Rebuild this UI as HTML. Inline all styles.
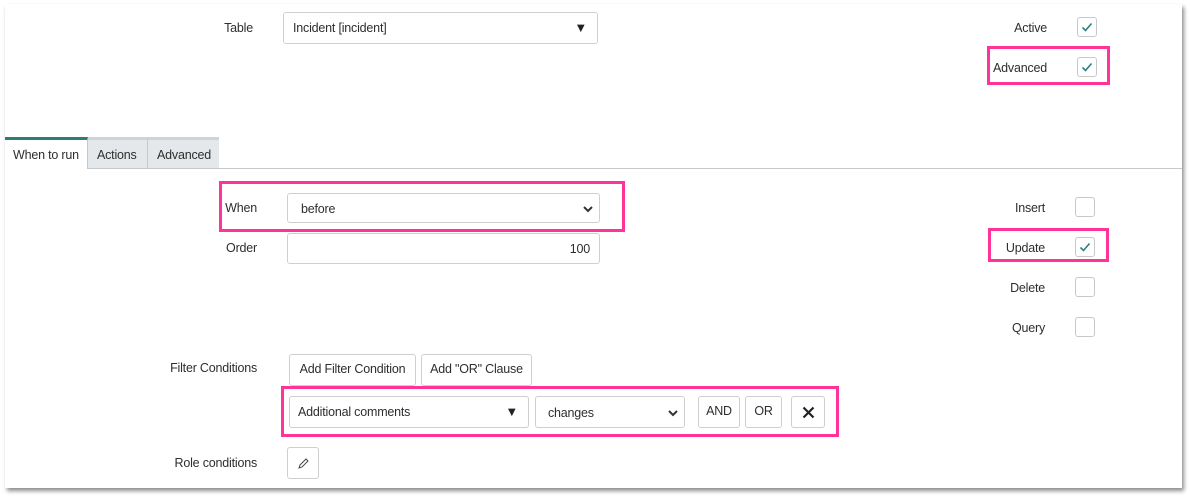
<!DOCTYPE html>
<html><head><meta charset="utf-8"><style>
*{box-sizing:border-box;margin:0;padding:0}
body{width:1190px;height:497px;background:#fff;font-family:"Liberation Sans",sans-serif;font-size:12.5px;color:#2e2e2e;position:relative;overflow:hidden;letter-spacing:-0.2px}
.panel{position:absolute;left:5px;top:4px;width:1177px;height:484px;background:#fff;box-shadow:2px 3px 4px rgba(0,0,0,.45)}
.a{position:absolute}
.lbl{position:absolute;text-align:right;line-height:16px;margin-top:1px}
.box{position:absolute;border:1px solid #cfcfcf;border-radius:3px;background:#fff;line-height:16px}
.hl{position:absolute;border:3px solid #ff3399}
.cb{position:absolute;width:20px;height:20px;border:1px solid #c8c8c8;border-radius:3px;background:#fff}
.ck{position:absolute;left:3px;top:3px}
.btn{position:absolute;border:1px solid #cfcfcf;border-radius:3px;background:#fff;text-align:center;line-height:29px}
.tri{position:absolute;right:10px;top:7px;font-size:13px;color:#222}
</style></head><body>
<div class="panel"></div>
<div class="lbl" style="left:150px;width:103px;top:19px">Table</div>
<div class="box" style="left:283px;top:12px;width:315px;height:32px;padding:7px 9px">Incident [incident]<span class="tri">▼</span></div>
<div class="lbl" style="left:950px;width:97px;top:19px">Active</div>
<div class="cb" style="left:1077px;top:17px"><svg class="ck" width="12" height="12"><path d="M1.5 6.5l3 3 6-7" stroke="#2a7f83" stroke-width="1.6" fill="none"/></svg></div>
<div class="hl" style="left:987px;top:46px;width:123px;height:39px"></div>
<div class="lbl" style="left:950px;width:97px;top:59px">Advanced</div>
<div class="cb" style="left:1077px;top:57px"><svg class="ck" width="12" height="12"><path d="M1.5 6.5l3 3 6-7" stroke="#2a7f83" stroke-width="1.6" fill="none"/></svg></div>

<div class="a" style="left:5px;top:168px;width:1177px;height:1px;background:#c8c8c8"></div>
<div class="a" style="left:5px;top:137px;width:83px;height:32px;background:#fff;border-top:3px solid #2e7d72;border-right:1px solid #c8c8c8;padding:8px 0 0 8px">When to run</div>
<div class="a" style="left:88px;top:137px;width:60px;height:31px;background:#e5e8ea;border-top:3px solid #cfd3d5;border-right:1px solid #c8c8c8;padding:8px 0 0 9px">Actions</div>
<div class="a" style="left:148px;top:137px;width:71px;height:31px;background:#e5e8ea;border-top:3px solid #cfd3d5;padding:8px 0 0 9px">Advanced</div>

<div class="hl" style="left:219px;top:181px;width:406px;height:51px"></div>
<div class="lbl" style="left:200px;width:57px;top:199px">When</div>
<div class="box" style="left:287px;top:193px;width:313px;height:30px;padding:7px 13px">before<svg class="a" style="right:6px;top:11px" width="10" height="8"><path d="M1 2l4 4 4-4" stroke="#333" stroke-width="2" fill="none"/></svg></div>
<div class="lbl" style="left:200px;width:57px;top:239px">Order</div>
<div class="box" style="left:287px;top:233px;width:313px;height:31px;padding:7px 9px;text-align:right">100</div>

<div class="lbl" style="left:950px;width:95px;top:199px">Insert</div>
<div class="cb" style="left:1075px;top:197px"></div>
<div class="hl" style="left:988px;top:228px;width:121px;height:34px"></div>
<div class="lbl" style="left:950px;width:95px;top:239px">Update</div>
<div class="cb" style="left:1075px;top:237px"><svg class="ck" width="12" height="12"><path d="M1.5 6.5l3 3 6-7" stroke="#2a7f83" stroke-width="1.6" fill="none"/></svg></div>
<div class="lbl" style="left:950px;width:95px;top:279px">Delete</div>
<div class="cb" style="left:1075px;top:277px"></div>
<div class="lbl" style="left:950px;width:95px;top:319px">Query</div>
<div class="cb" style="left:1075px;top:317px"></div>

<div class="lbl" style="left:120px;width:137px;top:359px">Filter Conditions</div>
<div class="btn" style="left:289px;top:354px;width:127px;height:32px">Add Filter Condition</div>
<div class="btn" style="left:421px;top:354px;width:111px;height:32px">Add "OR" Clause</div>
<div class="hl" style="left:281px;top:386px;width:558px;height:51px"></div>
<div class="box" style="left:289px;top:396px;width:240px;height:32px;padding:7px 8px">Additional comments<span class="tri">▼</span></div>
<div class="box" style="left:535px;top:396px;width:150px;height:32px;padding:8px 12px">changes<svg class="a" style="right:6px;top:12px" width="10" height="8"><path d="M1 2l4 4 4-4" stroke="#333" stroke-width="2" fill="none"/></svg></div>
<div class="btn" style="left:698px;top:396px;width:42px;height:32px">AND</div>
<div class="btn" style="left:745px;top:396px;width:37px;height:32px">OR</div>
<div class="btn" style="left:791px;top:396px;width:34px;height:32px"><svg class="a" style="left:10px;top:9px" width="13" height="13"><path d="M1.5 1.5l10 10M11.5 1.5l-10 10" stroke="#222" stroke-width="2.2"/></svg></div>

<div class="lbl" style="left:120px;width:137px;top:454px">Role conditions</div>
<div class="btn" style="left:287px;top:447px;width:32px;height:32px"><svg class="a" style="left:9px;top:9px" width="13" height="13"><path d="M2 11l1-3 6-6 2 2-6 6z" stroke="#444" stroke-width="1" fill="none"/></svg></div>
</body></html>
